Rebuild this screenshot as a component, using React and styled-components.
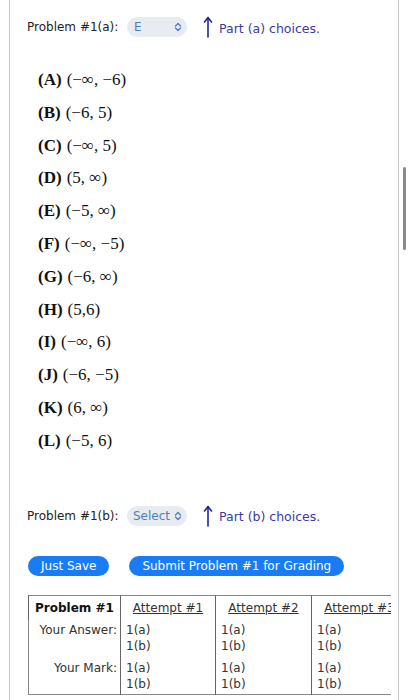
import React from 'react';
import styled, { createGlobalStyle } from 'styled-components';

const GlobalStyle = createGlobalStyle`
  html, body {
    margin: 0;
    padding: 0;
    background: #fff;
    overflow: hidden;
  }
  body {
    font-family: "DejaVu Sans", Verdana, sans-serif;
    color: #222;
  }
`;

const Page = styled.div`
  margin-left: 9px;
  width: 390px;
  height: 700px;
  border-left: 1px solid #c8c8c8;
  border-right: 1px solid #c8c8c8;
  padding: 16px 8px 0 17px;
  box-sizing: border-box;
  overflow: hidden;
`;

const PromptRow = styled.div`
  display: flex;
  align-items: center;
  height: 22px;
  font-size: 12px;
`;

const PromptLabel = styled.span`
  width: 100px;
  color: #222;
`;

const SelectBox = styled.div`
  display: flex;
  align-items: center;
  justify-content: space-between;
  width: 60px;
  height: 20px;
  box-sizing: border-box;
  padding: 0 4px 0 ${p => (p.$wide ? '6px' : '7px')};
  border-radius: 10px;
  background: #e8ebef;
  color: #4f7fc0;
  font-size: 12px;
`;

const Arrow = styled.svg`
  margin-left: 16px;
  flex: none;
`;

const Hint = styled.span`
  margin-left: 6px;
  margin-top: 2px;
  color: #3a3aa6;
  font-size: 12.5px;
`;

const Options = styled.ol`
  list-style: none;
  margin: 32px 0 0 11px;
  padding: 0;
  display: flex;
  flex-direction: column;
  gap: 12.8px;
  font-family: "Liberation Serif", "Times New Roman", serif;
  font-size: 17px;
  line-height: 20px;
  color: #111;
`;

const OptionKey = styled.b`
  margin-right: 5px;
`;

const PartB = styled.div`
  margin-top: 54px;
`;

const ButtonRow = styled.div`
  display: flex;
  gap: 20px;
  margin-top: 29px;
  padding-left: 1px;
`;

const Button = styled.button`
  height: 20px;
  padding: 0 13px;
  border: none;
  border-radius: 10px;
  background: #1a7cf4;
  color: #fff;
  font-family: "DejaVu Sans", Verdana, sans-serif;
  font-size: 12px;
  line-height: 20px;
`;

const TableWrap = styled.div`
  margin-top: 19px;
  margin-left: 1px;
  width: 363px;
  overflow: hidden;
`;

const Table = styled.table`
  width: 379px;
  border-collapse: collapse;
  border: 1px solid #888;
  font-size: 12px;
  white-space: nowrap;
  table-layout: fixed;
`;

const Col = styled.col`
  width: ${p => p.$w}px;
`;

const HeadCell = styled.th`
  text-align: ${p => (p.$left ? 'left' : 'center')};
  font-weight: ${p => (p.$left ? 'bold' : 'normal')};
  text-decoration: ${p => (p.$left ? 'none' : 'underline')};
  color: ${p => (p.$left ? '#111' : '#333')};
  overflow: hidden;
  padding: 5px 2px 5px ${p => (p.$left ? '6px' : '2px')};
  border-left: 1px solid #666;
`;

const LabelCell = styled.td`
  text-align: right;
  vertical-align: top;
  padding: ${p => (p.$last ? '4px 3px 3px 4px' : '2px 3px 2px 4px')};
  line-height: 16px;
  color: #333;
`;

const ValueCell = styled.td`
  vertical-align: top;
  border-left: 1px solid #666;
  padding: ${p => (p.$last ? '4px 4px 2px 5px' : '2px 4px 2px 5px')};
  line-height: 16px;
  color: #333;
`;

const Scrollbar = styled.div`
  position: fixed;
  top: 167px;
  left: 403px;
  width: 3px;
  height: 83px;
  border-radius: 2px;
  background: #8a8a8a;
`;

const Chevrons = () => (
  <svg width="10" height="10" viewBox="0 0 10 10" fill="none" stroke="#4f7fc0" strokeWidth="1.4" strokeLinecap="round" strokeLinejoin="round">
    <polyline points="2.5,4 5,1.5 7.5,4" />
    <polyline points="2.5,6 5,8.5 7.5,6" />
  </svg>
);

const UpArrow = () => (
  <Arrow width="10" height="22" viewBox="0 0 10 22" fill="none" stroke="#23238c" strokeWidth="1.6" strokeLinecap="round" strokeLinejoin="round">
    <line x1="5" y1="2" x2="5" y2="21" />
    <polyline points="1.5,6 5,1.5 8.5,6" />
  </Arrow>
);

const options = [
  ['A', '(−∞, −6)'],
  ['B', '(−6, 5)'],
  ['C', '(−∞, 5)'],
  ['D', '(5, ∞)'],
  ['E', '(−5, ∞)'],
  ['F', '(−∞, −5)'],
  ['G', '(−6, ∞)'],
  ['H', '(5,6)'],
  ['I', '(−∞, 6)'],
  ['J', '(−6, −5)'],
  ['K', '(6, ∞)'],
  ['L', '(−5, 6)'],
];

const attempts = ['Attempt #1', 'Attempt #2', 'Attempt #3'];

const Prompt = ({ label, value, part, wide }) => (
  <PromptRow>
    <PromptLabel>{label}</PromptLabel>
    <SelectBox $wide={wide}>
      <span>{value}</span>
      <Chevrons />
    </SelectBox>
    <UpArrow />
    <Hint>Part ({part}) choices.</Hint>
  </PromptRow>
);

const Lines = ({ items }) => items.map(i => <div key={i}>{i}</div>);

export default function App() {
  return (
    <>
      <GlobalStyle />
      <Page>
        <Prompt label="Problem #1(a):" value="E" part="a" />
        <Options>
          {options.map(([k, v]) => (
            <li key={k}>
              <OptionKey>({k})</OptionKey>
              {v}
            </li>
          ))}
        </Options>
        <PartB>
          <Prompt label="Problem #1(b):" value="Select" part="b" wide />
        </PartB>
        <ButtonRow>
          <Button>Just Save</Button>
          <Button>Submit Problem #1 for Grading</Button>
        </ButtonRow>
        <TableWrap>
          <Table>
            <colgroup>
              <Col $w={92} />
              <Col $w={95} />
              <Col $w={96} />
              <Col $w={96} />
            </colgroup>
            <thead>
              <tr>
                <HeadCell $left>Problem #1</HeadCell>
                {attempts.map(a => (
                  <HeadCell key={a}>{a}</HeadCell>
                ))}
              </tr>
            </thead>
            <tbody>
              <tr>
                <LabelCell>Your Answer:</LabelCell>
                {attempts.map(a => (
                  <ValueCell key={a}><Lines items={['1(a)', '1(b)']} /></ValueCell>
                ))}
              </tr>
              <tr>
                <LabelCell $last>Your Mark:</LabelCell>
                {attempts.map(a => (
                  <ValueCell key={a} $last><Lines items={['1(a)', '1(b)']} /></ValueCell>
                ))}
              </tr>
            </tbody>
          </Table>
        </TableWrap>
      </Page>
      <Scrollbar />
    </>
  );
}
